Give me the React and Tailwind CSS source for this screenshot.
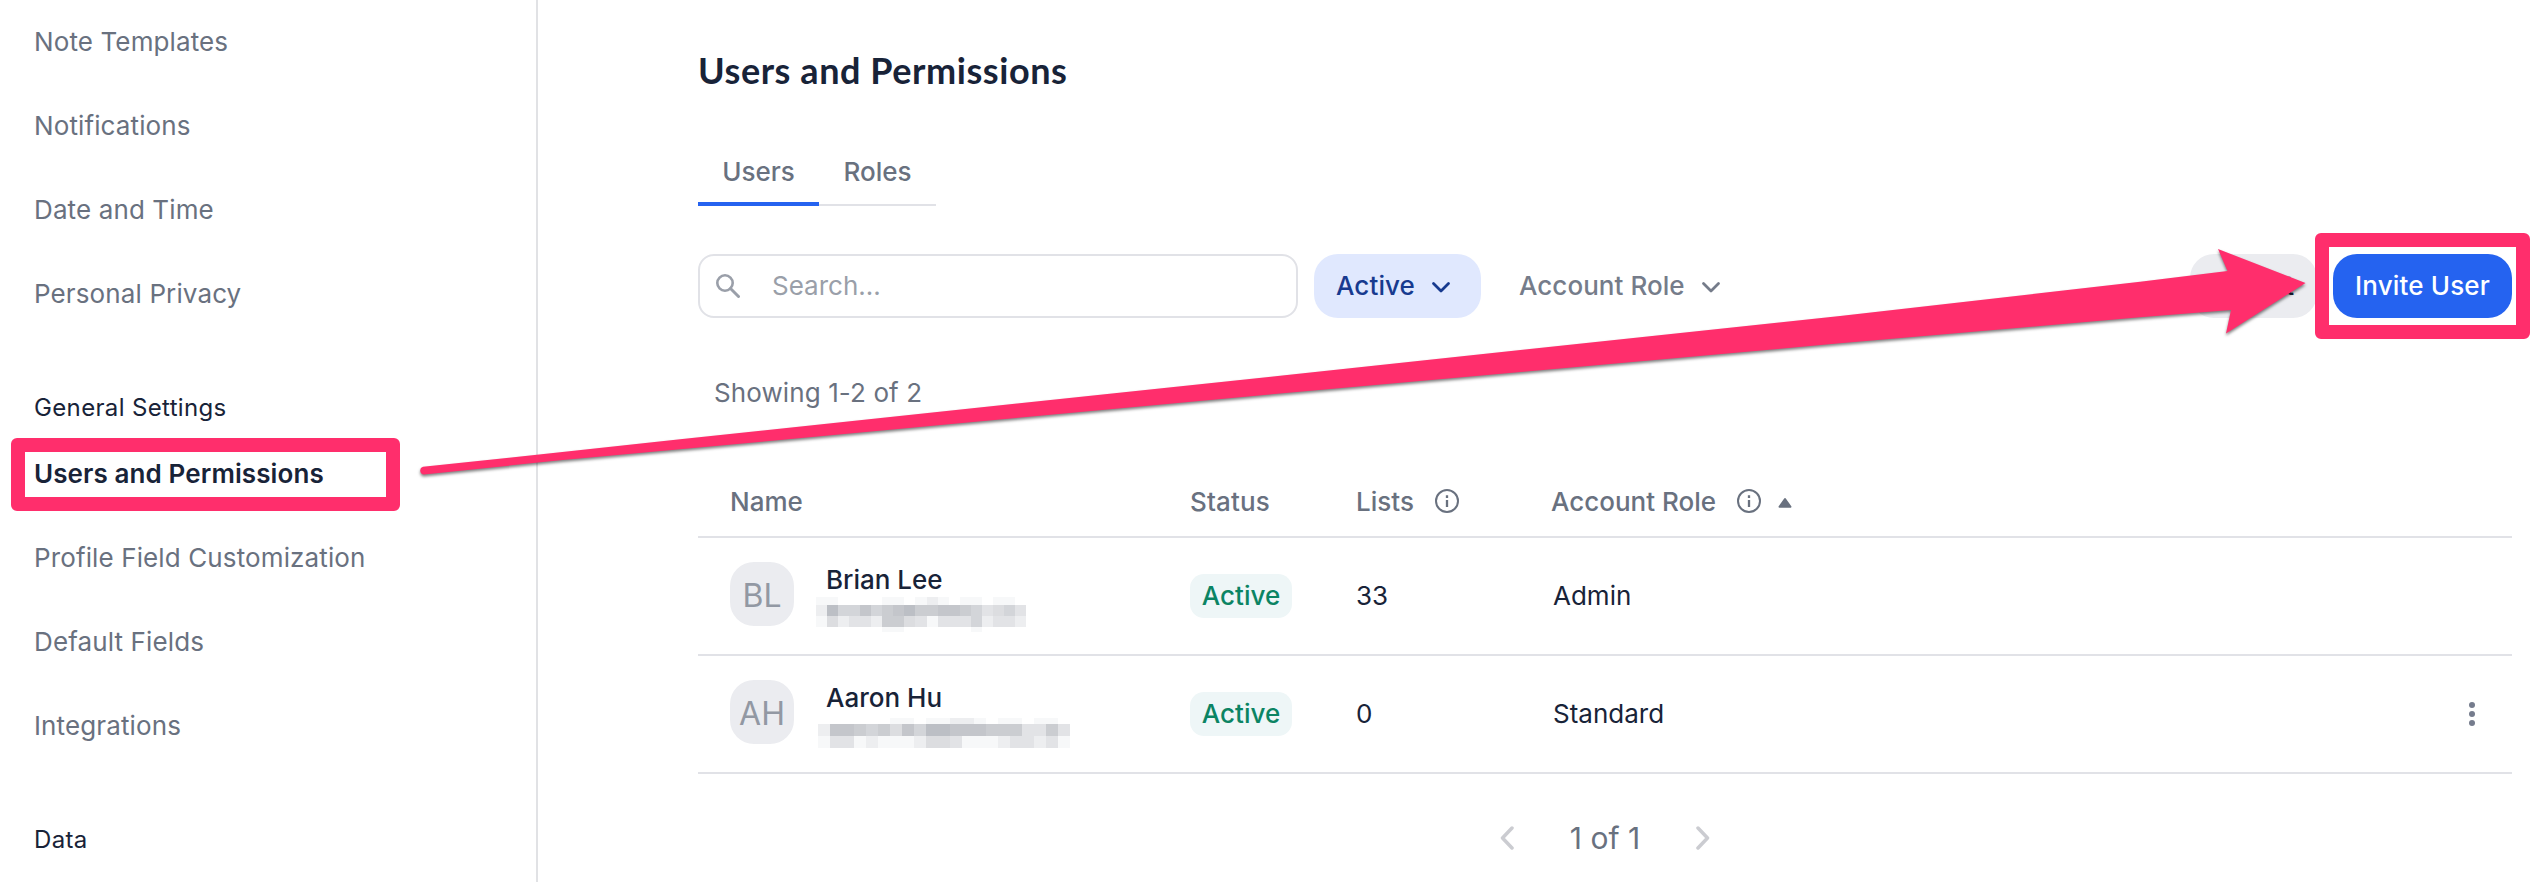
import React, { useState } from "react";

const personalItems = ["Note Templates", "Notifications", "Date and Time", "Personal Privacy"];

const generalItems = [
  "Users and Permissions",
  "Profile Field Customization",
  "Default Fields",
  "Integrations",
];

// Each digit is the darkness of one mosaic cell, 0 = blank
const users = [
  {
    initials: "BL",
    name: "Brian Lee",
    lists: 33,
    role: "Admin",
    cell: 11.05,
    left: -10,
    top: 37,
    heights: [8, 11, 11, 5],
    mosaic: [
      "1100001101210110110",
      "2855756786677653453",
      "1423326643133352332",
      "0000001100000010000",
    ],
  },
  {
    initials: "AH",
    name: "Aaron Hu",
    lists: 0,
    role: "Standard",
    menu: true,
    cell: 11.98,
    left: -8,
    top: 40,
    heights: [6, 12, 12],
    mosaic: [
      "000000110112210110110",
      "277656475887776663363",
      "133121112443111233231",
    ],
  },
];

const shades = [
  "transparent",
  "#f7f8f9",
  "#edeef0",
  "#e2e3e6",
  "#dcdde0",
  "#d3d5d9",
  "#cbcdd1",
  "#c4c6cb",
  "#bcbfc5",
];

function Chevron({ className }) {
  return (
    <svg width="20" height="12" viewBox="0 0 20 12" fill="none" className={className}>
      <path
        d="M2.5 2.5 10 10l7.500-7.500"
        stroke="currentColor"
        strokeWidth="2.8"
        strokeLinecap="round"
        strokeLinejoin="round"
      />
    </svg>
  );
}

function InfoIcon({ className }) {
  return (
    <svg width="24" height="24" viewBox="0 0 24 24" fill="none" className={className}>
      <circle cx="12" cy="12" r="11" stroke="currentColor" strokeWidth="2" />
      <path d="M12 11v7M12 6.300v2.600" stroke="currentColor" strokeWidth="2.300" />
    </svg>
  );
}

function NavItem({ label, active }) {
  return (
    <a
      className={
        active
          ? "flex h-[84px] items-center pb-0.5 whitespace-nowrap text-[26px] font-semibold tracking-[0.1px] text-[#182338]"
          : "flex h-[84px] items-center pb-0.5 whitespace-nowrap text-[26px] tracking-[0.12px] text-[#69717f]"
      }
    >
      {label}
    </a>
  );
}

function Mosaic({ user }) {
  return (
    <svg
      width="270"
      height="36"
      className="absolute"
      style={{ left: user.left, top: user.top }}
      shapeRendering="crispEdges"
    >
      {user.mosaic.map((row, r) => {
        const y = user.heights.slice(0, r).reduce((a, b) => a + b, 0);
        return row.split("").map((v, c) => (
          <rect
            key={`${r}-${c}`}
            x={c * user.cell}
            y={y}
            width={user.cell}
            height={user.heights[r]}
            fill={shades[Number(v)]}
          />
        ));
      })}
    </svg>
  );
}

function UserRow({ user }) {
  return (
    <div className="flex h-[118px] items-center border-b-2 border-[#e1e2e7] text-[26px] text-[#182338]">
      <div className="flex w-[492px] items-center pl-8">
        <div className="-mt-1 flex h-16 w-16 items-center justify-center rounded-[24px] bg-[#ebecf0] pt-[3px] text-[32px] text-[#9298a3]">
          {user.initials}
        </div>
        <div className="relative ml-8 h-[72px] whitespace-nowrap font-medium">
          {user.name}
          <Mosaic user={user} />
        </div>
      </div>
      <div className="w-[166px]">
        <span className="flex h-11 w-[102px] items-center justify-center rounded-[14px] bg-[#eef6f7] pb-0.5 font-medium text-[#0b8463]">
          Active
        </span>
      </div>
      <div className="w-[197px] pb-0.5">{user.lists}</div>
      <div className="flex-1 pb-0.5">{user.role}</div>
      {user.menu && (
        <svg width="6" height="24" viewBox="0 0 6 24" fill="#757c8d" className="mr-[37px]">
          <circle cx="3" cy="3" r="3" />
          <circle cx="3" cy="12" r="3" />
          <circle cx="3" cy="21" r="3" />
        </svg>
      )}
    </div>
  );
}

export default function App() {
  const [search, setSearch] = useState("");

  return (
    <div className="relative flex h-[882px] w-[2548px] overflow-hidden bg-white font-['Inter',sans-serif]">
      {/* Sidebar */}
      <aside className="h-full w-[538px] shrink-0 border-r-2 border-[#e1e2e5] pl-[34px]">
        <nav>
          {personalItems.map((item) => (
            <NavItem key={item} label={item} />
          ))}
        </nav>
        <h3 className="mt-14 mb-2 text-2xl tracking-[0.35px] text-[#182338]">General Settings</h3>
        <nav>
          {generalItems.map((item, i) => (
            <NavItem key={item} label={item} active={i === 0} />
          ))}
        </nav>
        <h3 className="mt-14 text-2xl tracking-[0.35px] text-[#182338]">Data</h3>
      </aside>

      {/* Content */}
      <main className="flex w-[1974px] flex-col pl-40">
        <h1 className="mt-[45px] h-[50px] font-['Lato','Inter',sans-serif] text-[36px] leading-[50px] font-bold tracking-[0.56px] text-[#182338]">
          Users and Permissions
        </h1>

        <div className="mt-[47px] flex h-16 w-[238px] text-[26px] font-medium text-[#69717f]">
          <button className="w-[121px] border-b-4 border-[#2563f0] pb-0.5">Users</button>
          <button className="w-[117px] border-b-2 border-[#e1e2e7] pb-1">Roles</button>
        </div>

        <div className="mt-12 flex h-16 items-center text-[26px] font-medium">
          <div className="flex h-16 w-[600px] items-center rounded-2xl border-2 border-[#e1e2e7] pl-4">
            <svg width="24" height="24" viewBox="0 0 24 24" fill="none" stroke="#9a9fa9">
              <circle cx="9" cy="9" r="7.700" strokeWidth="2.600" />
              <path d="M14.500 14.500 22.500 22.500" strokeWidth="3" strokeLinecap="round" />
            </svg>
            <input
              value={search}
              onChange={(e) => setSearch(e.target.value)}
              placeholder="Search..."
              className="ml-8 w-[480px] pb-0.5 font-normal outline-none placeholder:text-[#9a9fa9]"
            />
          </div>
          <button className="ml-4 flex h-16 w-[167px] items-center rounded-[24px] bg-[#e0e8fe] pb-0.5 pl-[22px] tracking-[0.1px] text-[#173a8f]">
            Active
            <Chevron className="mt-1 ml-4" />
          </button>
          <button className="ml-[38px] flex items-center pb-0.5 tracking-[0.05px] text-[#757c8a]">
            Account Role
            <Chevron className="mt-1 ml-4" />
          </button>
          <button className="ml-auto h-16 w-[127px] rounded-[24px] bg-[#ebecf0] pb-0.5 text-[#182338]">
            Export
          </button>
          <button className="ml-4 h-16 w-[179px] rounded-[24px] bg-[#2563f0] pb-0.5 tracking-[0.15px] text-white">
            Invite User
          </button>
        </div>

        <p className="mt-[55px] pl-4 text-[26px] leading-[40px] tracking-[0.1px] text-[#69717f]">
          Showing 1-2 of 2
        </p>

        {/* Users table */}
        <div className="mt-[47px] flex h-[78px] items-center border-b-2 border-[#e1e2e7] pt-1.5 text-[26px] font-medium text-[#69717f]">
          <div className="w-[492px] pl-8">Name</div>
          <div className="w-[166px] tracking-[0.15px]">Status</div>
          <div className="flex w-[195px] items-center">
            Lists
            <InfoIcon className="ml-[21px]" />
          </div>
          <div className="flex items-center">
            Account Role
            <InfoIcon className="ml-[21px]" />
            <svg width="14" height="12" viewBox="0 0 14 12" className="mt-1 ml-[17px]">
              <path
                d="M7 2 12.500 9.800H1.500Z"
                fill="currentColor"
                stroke="currentColor"
                strokeWidth="2"
                strokeLinejoin="round"
              />
            </svg>
          </div>
        </div>
        {users.map((user) => (
          <UserRow key={user.name} user={user} />
        ))}

        <div className="mt-10 flex h-12 items-center justify-center text-[30px] text-[#69717f]">
          <svg width="14" height="24" viewBox="0 0 14 24" fill="none" stroke="#cbccd1">
            <path d="M12 2 2.500 12 12 22" strokeWidth="3.500" strokeLinecap="round" strokeLinejoin="round" />
          </svg>
          <span className="w-[182px] text-center">1 of 1</span>
          <svg width="14" height="24" viewBox="0 0 14 24" fill="none" stroke="#cbccd1">
            <path d="M2 2 11.500 12 2 22" strokeWidth="3.500" strokeLinecap="round" strokeLinejoin="round" />
          </svg>
        </div>
      </main>

      {/* Callouts drawn over the page */}
      <div className="absolute top-[438px] left-[11px] h-[73px] w-[389px] rounded-[6px] border-[14px] border-[#ff2e6c]" />
      <div className="absolute top-[233px] left-[2315px] h-[106px] w-[215px] rounded-[6px] border-[14px] border-[#ff2e6c]" />
      <svg
        width="2548"
        height="882"
        className="pointer-events-none absolute inset-0 drop-shadow-[0_2px_1.5px_rgba(0,0,0,0.5)]"
      >
        <path
          d="M423 466.700 560 452.300 680 439.300 1280 375.700 1840 316 2140 281.700 2227.500 271 2218 249 2305.500 283 2226 333.500 2231 310 2140 317.300 1840 343.300 1280 393.500 680 449.300 560 460.300 424 474.500A4 4 0 0 1 423 466.700Z"
          fill="#ff2e6c"
        />
      </svg>
    </div>
  );
}
